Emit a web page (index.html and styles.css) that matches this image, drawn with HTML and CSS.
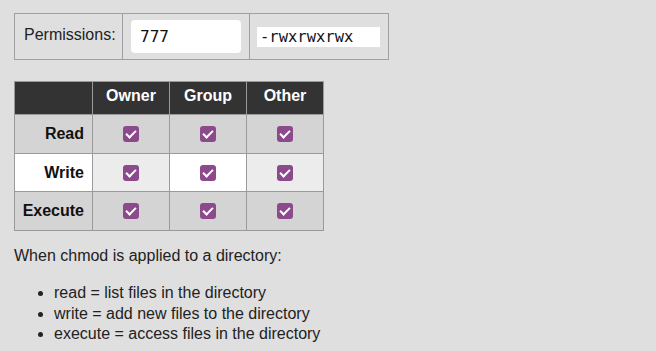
FILE: index.html
```html
<!DOCTYPE html>
<html>
<head>
<meta charset="utf-8">
<link rel="stylesheet" href="styles.css">
</head>
<body>
<table class="perm">
  <tr>
    <td class="label">Permissions:</td>
    <td class="inputcell"><div class="octal">777</div></td>
    <td class="symcell"><span class="sym">-rwxrwxrwx</span></td>
  </tr>
</table>

<table class="grid">
  <colgroup>
    <col class="c-label">
    <col class="c-val">
    <col class="c-val">
    <col class="c-val">
  </colgroup>
  <tr class="head">
    <th></th><th>Owner</th><th>Group</th><th>Other</th>
  </tr>
  <tr class="gray">
    <th class="row">Read</th>
    <td><span class="cb"></span></td>
    <td><span class="cb"></span></td>
    <td><span class="cb"></span></td>
  </tr>
  <tr class="light">
    <th class="row white">Write</th>
    <td class="alt"><span class="cb"></span></td>
    <td class="white"><span class="cb"></span></td>
    <td class="alt"><span class="cb"></span></td>
  </tr>
  <tr class="gray">
    <th class="row">Execute</th>
    <td><span class="cb"></span></td>
    <td><span class="cb"></span></td>
    <td><span class="cb"></span></td>
  </tr>
</table>

<p class="intro">When chmod is applied to a directory:</p>
<ul class="list">
  <li>read = list files in the directory</li>
  <li>write = add new files to the directory</li>
  <li>execute = access files in the directory</li>
</ul>
</body>
</html>
```
FILE: styles.css
```css
html, body {
  margin: 0;
  background: #dfdfdf;
}
body {
  padding: 13px 14px;
  font-family: "Liberation Sans", Arial, sans-serif;
  font-size: 16px;
  color: #222;
}
.perm {
  border-collapse: collapse;
  border: 1px solid #a0a0a0;
}
.perm td {
  border: 1px solid #a0a0a0;
  height: 46px;
  padding: 0;
  vertical-align: middle;
}
.perm .label {
  width: 108px;
  padding-left: 9px;
  padding-bottom: 3px;
  box-sizing: border-box;
  color: #222;
}
.perm .inputcell {
  width: 127px;
  padding-left: 8px;
  box-sizing: border-box;
}
.octal {
  width: 110px;
  height: 33px;
  box-sizing: border-box;
  background: #fff;
  border-radius: 4px;
  font-family: "DejaVu Sans Mono", monospace;
  font-size: 16px;
  line-height: 33px;
  padding-left: 9px;
  color: #111;
}
.perm .symcell {
  width: 139px;
  padding-left: 7px;
  box-sizing: border-box;
}
.sym {
  display: block;
  width: 123px;
  height: 20px;
  background: #fff;
  font-family: "DejaVu Sans Mono", monospace;
  font-size: 15.5px;
  line-height: 20px;
  padding-left: 3px;
  box-sizing: border-box;
  color: #111;
}
.grid {
  margin-top: 21px;
  border-collapse: collapse;
  border: 1px solid #9a9a9a;
  table-layout: fixed;
  width: 310px;
}
.c-label { width: 78px; }
.c-val { width: 77px; }
.grid th, .grid td {
  border: 1px solid #9a9a9a;
  padding: 0;
  text-align: center;
  vertical-align: middle;
}
.grid .head th {
  background: #333;
  color: #fff;
  height: 33px;
  font-weight: bold;
  padding-bottom: 5px;
  box-sizing: border-box;
}
.grid .gray th, .grid .gray td {
  background: #d4d4d4;
}
.grid tr.gray, .grid tr.light {
  height: 38.7px;
}
.grid th.row {
  text-align: right;
  padding-right: 8px;
  font-weight: bold;
  color: #111;
}
.grid td.alt {
  background: #ececec;
}
.grid .white {
  background: #fff;
}
.cb {
  display: inline-block;
  width: 16px;
  height: 16px;
  border-radius: 3px;
  background: #8c4a8c;
  position: relative;
  vertical-align: middle;
  margin-top: -1px;
}
.cb::after {
  content: "";
  position: absolute;
  left: 5px;
  top: 2px;
  width: 4px;
  height: 8px;
  border: solid #fff;
  border-width: 0 2px 2px 0;
  transform: rotate(45deg);
}
.intro {
  margin: 15px 0 0;
  line-height: 20px;
}
.list {
  margin: 17px 0 0;
  padding-left: 40px;
  line-height: 20.5px;
}
```
